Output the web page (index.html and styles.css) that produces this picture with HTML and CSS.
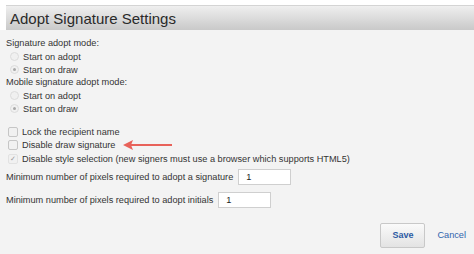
FILE: index.html
```html
<!DOCTYPE html>
<html lang="en">
<head>
  <meta charset="UTF-8">
  <title>Adopt Signature Settings</title>
  <link rel="stylesheet" href="styles.css">
</head>
<body>
  <div class="dialog">
    <div class="dialog-title">Adopt Signature Settings</div>
    <div class="dialog-body">
      <div class="group-label">Signature adopt mode:</div>
      <label class="opt"><span class="radio"></span>Start on adopt</label>
      <label class="opt"><span class="radio checked"></span>Start on draw</label>
      <div class="group-label">Mobile signature adopt mode:</div>
      <label class="opt"><span class="radio"></span>Start on adopt</label>
      <label class="opt"><span class="radio checked"></span>Start on draw</label>

      <div class="checks">
        <label class="chk"><span class="box"></span>Lock the recipient name</label>
        <label class="chk"><span class="box"></span>Disable draw signature
          <svg class="arrow" width="50" height="10" viewBox="0 0 50 10">
            <line x1="5" y1="5" x2="49" y2="5" stroke="#e8625a" stroke-width="2.2"/>
            <path d="M0 5 L10 0 L8 5 L10 10 Z" fill="#e8625a"/>
          </svg>
        </label>
        <label class="chk"><span class="box checked">&#10003;</span>Disable style selection (new signers must use a browser which supports HTML5)</label>
      </div>

      <div class="field">Minimum number of pixels required to adopt a signature <span class="input">1</span></div>
      <div class="field">Minimum number of pixels required to adopt initials <span class="input">1</span></div>

      <div class="actions">
        <button class="btn-save">Save</button>
        <a href="javascript:;" class="cancel">Cancel</a>
      </div>
    </div>
  </div>
</body>
</html>
```

FILE: styles.css
```css
body {
  margin: 0;
  background: #f3f3f3;
  font-family: "Liberation Sans", Arial, sans-serif;
  color: #333;
}
.dialog {
  padding-top: 5px;
  background: #fff;
}
.dialog-title {
  margin-left: 6px;
  height: 24px;
  border-top: 1px solid #d4d4d4;
  background: linear-gradient(#efefef, #c9c9c9);
  font-size: 15px;
  line-height: 25px;
  padding-left: 4px;
  color: #2a2a2a;
}
.dialog-body {
  background: #f3f3f3;
  padding: 7px 8px 6px 6px;
  font-size: 9.2px;
}
.group-label {
  height: 13px;
  line-height: 13px;
}
.opt {
  display: flex;
  align-items: center;
  height: 13px;
  padding-left: 4px;
}
.radio {
  width: 7px;
  height: 7px;
  border-radius: 50%;
  border: 1px solid #dcdcdc;
  background: #f0f0f0;
  margin-right: 4px;
  display: flex;
  align-items: center;
  justify-content: center;
}
.radio.checked::after {
  content: "";
  width: 3px;
  height: 3px;
  border-radius: 50%;
  background: #a8a8a8;
}
.checks {
  margin-top: 10px;
}
.chk {
  display: flex;
  align-items: center;
  height: 13.5px;
  padding-left: 2px;
}
.box {
  width: 8px;
  height: 8px;
  border: 1px solid #c6c6c6;
  border-radius: 2px;
  background: #f1f1f1;
  margin-right: 4px;
  font-size: 7px;
  line-height: 8px;
  text-align: center;
  color: #9a9a9a;
}
.box.checked {
  border-color: #e2e2e2;
}
.arrow {
  margin-left: 8px;
}
.field {
  display: flex;
  align-items: center;
  height: 23px;
}
.field:first-of-type {
  margin-top: 5px;
}
.input {
  margin-left: 5px;
  width: 44px;
  height: 14px;
  border: 1px solid #cfcfcf;
  background: #fff;
  padding-left: 7px;
  line-height: 15px;
  color: #222;
}
.actions {
  display: flex;
  justify-content: flex-end;
  align-items: center;
  margin-top: 11px;
  gap: 12px;
}
.btn-save {
  width: 45px;
  height: 25px;
  border: 1px solid #c8c8c8;
  border-radius: 2px;
  background: linear-gradient(#fafafa, #e3e3e3);
  font: bold 9px "Liberation Sans", Arial, sans-serif;
  color: #2d5aa3;
  padding: 0;
}
.cancel {
  text-decoration: none;
  color: #2f64ad;
}
```
